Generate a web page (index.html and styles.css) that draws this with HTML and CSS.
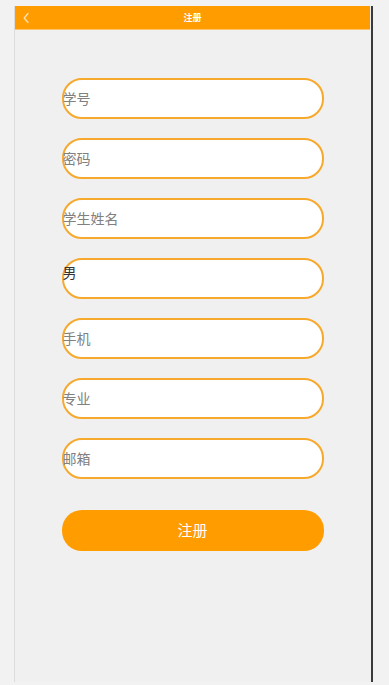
FILE: index.html
```html
<!DOCTYPE html>
<html lang="zh">
<head>
<meta charset="utf-8">
<title>注册</title>
<link rel="stylesheet" href="styles.css">
</head>
<body>
<div class="frame">
  <header class="bar">
    <svg class="back" width="8" height="12" viewBox="0 0 8 12"><path d="M6 1.5 L2.2 6 L6 10.5" fill="none" stroke="#ffe2b5" stroke-width="1.3" stroke-linecap="round" stroke-linejoin="round"/></svg>
    <span class="title">注册</span>
  </header>
  <main class="form">
    <div class="field"><span class="ph">学号</span></div>
    <div class="field"><span class="ph">密码</span></div>
    <div class="field"><span class="ph">学生姓名</span></div>
    <div class="field field-top"><span class="val">男</span></div>
    <div class="field"><span class="ph">手机</span></div>
    <div class="field"><span class="ph">专业</span></div>
    <div class="field"><span class="ph">邮箱</span></div>
    <div class="btn">注册</div>
  </main>
</div>
</body>
</html>
```
FILE: styles.css
```css
html, body {
  margin: 0;
  padding: 0;
  background: #f2f2f2;
  font-family: "Noto Sans CJK SC", "Liberation Sans", sans-serif;
}
.frame {
  margin: 6px 0 0 14px;
  width: 356px;
  height: 676px;
  background: #f0f0f0;
  border-left: 1px solid #dcdcdc;
  border-right: 2px solid #3a3a3a;
  box-sizing: content-box;
}
.bar {
  position: relative;
  height: 23px;
  background: #ff9c00;
  border-bottom: 1px solid #ffc46a;
  display: flex;
  align-items: center;
  justify-content: center;
  margin-right: 1px;
}
.back {
  position: absolute;
  left: 7px;
  top: 6px;
}
.title {
  color: #fff;
  font-size: 9px;
  font-weight: bold;
}
.form {
  padding-top: 48px;
  display: flex;
  flex-direction: column;
  align-items: center;
  gap: 19px;
  margin-left: -1px;
}
.field {
  width: 262px;
  height: 41px;
  box-sizing: border-box;
  border: 2px solid #f6a92d;
  border-radius: 20px;
  background: #fff;
  display: flex;
  align-items: center;
  padding-bottom: 2px;
}
.field-top {
  align-items: flex-start;
  padding-top: 2px;
  padding-bottom: 0;
}
.ph {
  font-size: 14px;
  color: #808080;
  margin-left: -1px;
}
.val {
  font-size: 14px;
  color: #333;
  margin-left: -1px;
}
.btn {
  margin-top: 12px;
  width: 262px;
  height: 41px;
  border-radius: 20px;
  background: #ff9c00;
  color: #fff;
  font-size: 15px;
  display: flex;
  align-items: center;
  justify-content: center;
  padding-bottom: 2px;
  box-sizing: border-box;
}
```
